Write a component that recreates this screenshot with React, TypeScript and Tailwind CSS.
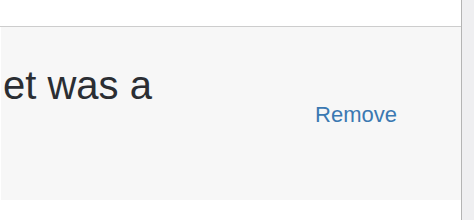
import React from "react";

export default function App() {
  return (
    <div className="flex w-[474px] h-[220px] bg-white" style={{ fontFamily: '"Liberation Sans", Arial, sans-serif' }}>
      {/* Main column */}
      <div className="flex flex-col w-[461px]">
        {/* Top bar */}
        <div className="h-[27px] bg-white border-b border-[#cdcdcd]" />

        {/* Item row */}
        <div className="h-[173px] ml-[1px] bg-[#f7f7f7] flex justify-between pr-[64px]">
          <p className="pl-[2px] pt-[38px] text-[40px] leading-none text-[#2b2e33] whitespace-nowrap">
            et was a
          </p>
          <button className="pt-[77px] self-start text-[22px] leading-none text-[#3b79b2]">
            Remove
          </button>
        </div>
      </div>

      {/* Scroll gutter */}
      <div className="flex-1 border-l border-[#b4b4b4] bg-[#efeff1]" />
    </div>
  );
}
